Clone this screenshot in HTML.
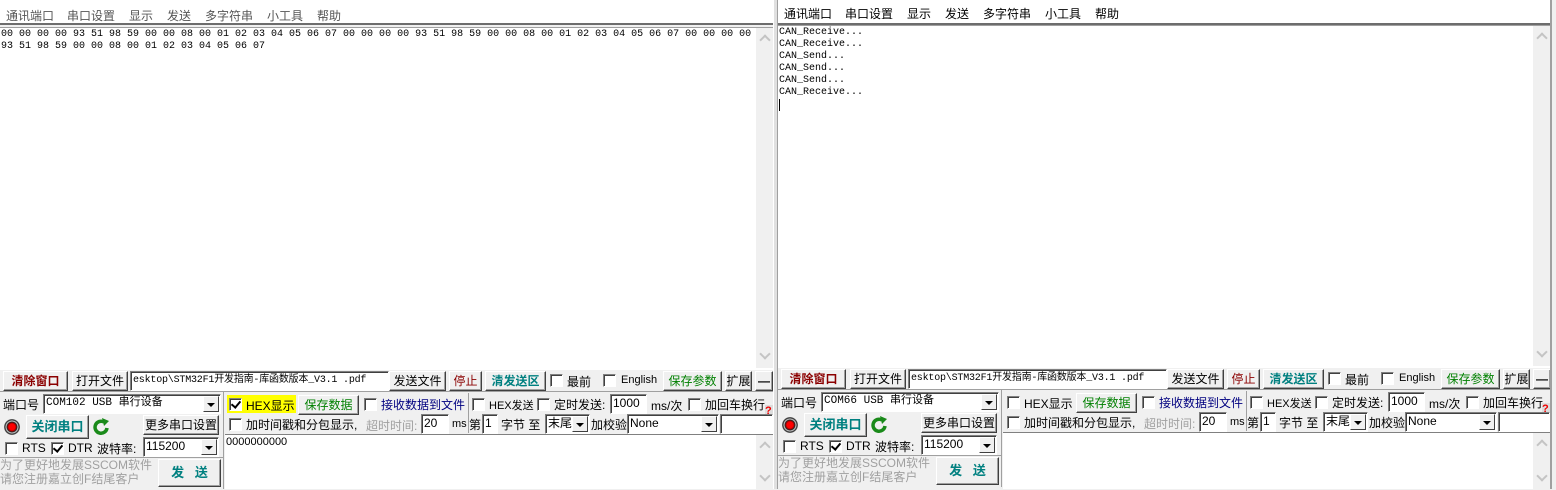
<!DOCTYPE html>
<html><head><meta charset="utf-8">
<style>
*{margin:0;padding:0;box-sizing:border-box}
body{width:1556px;height:489px;background:#f0f0f0;position:relative;overflow:hidden;font-family:"Liberation Sans","Noto Sans CJK SC",sans-serif;font-size:12px;color:#000}
.p{position:absolute;top:0;height:489px;width:773px;background:#f0f0f0}
.a{position:absolute;white-space:nowrap}
.menu{position:absolute;top:0;left:0;right:0;height:25px;background:#fff;border-bottom:2px solid #6d6d6d}
.menu span{position:absolute;top:6px;font-size:12px}
.recv{position:absolute;left:0;top:27px;right:0;height:341px;background:#fff;border-top:1px solid #a0a0a0}
.sb{position:absolute;right:0;top:0;width:17px;bottom:0;background:#f0f0f0}
.sb:before{content:"";position:absolute;left:5px;top:8px;width:6px;height:6px;border-left:2px solid #c4c4c4;border-top:2px solid #c4c4c4;transform:rotate(45deg)}
.sb:after{content:"";position:absolute;left:5px;bottom:10px;width:6px;height:6px;border-right:2px solid #c4c4c4;border-bottom:2px solid #c4c4c4;transform:rotate(45deg)}
.mono{font-family:"Liberation Mono","Noto Sans CJK SC",monospace;font-size:10px;line-height:12px}
.btn{position:absolute;height:20px;background:#f0f0f0;border:1px solid;border-color:#fff #404040 #404040 #fff;box-shadow:inset -1px -1px 0 #a0a0a0;text-align:center;line-height:18px;font-size:12px;white-space:nowrap}
.in{position:absolute;height:20px;background:#fff;border:1px solid;border-color:#808080 #fff #fff #808080;box-shadow:inset 1px 1px 0 #404040;line-height:17px;padding-left:2px;white-space:nowrap;overflow:hidden}
.dd{position:absolute;right:1px;top:1px;width:16px;height:16px;background:#f0f0f0;border:1px solid;border-color:#fff #404040 #404040 #fff}
.dd:after{content:"";position:absolute;left:3px;top:6px;border-left:4px solid transparent;border-right:4px solid transparent;border-top:4px solid #000}
.cb{position:absolute;width:13px;height:13px;background:#fff;border:1px solid;border-color:#808080 #fff #fff #808080;box-shadow:inset 1px 1px 0 #404040}
.cb.c{background:#fff url("") no-repeat}
.cb.c:after{content:"";position:absolute;left:3px;top:0px;width:4px;height:7px;border-right:2px solid #000;border-bottom:2px solid #000;transform:rotate(40deg)}
.sep{position:absolute;background:#a0a0a0}
.rec{position:absolute;width:16px;height:16px;border-radius:50%;background:radial-gradient(circle,#f00 0 3px,#a00 4px,#222 5px,#ddd 6px,#222 7px,#888 8px)}
.fn{font-size:10px;letter-spacing:-0.2px}
</style></head><body>

<!-- LEFT -->
<div class="p" style="left:0">
 <div class="menu" style="color:#555">
  <span style="left:6px;top:7px">通讯端口</span><span style="left:67px;top:7px">串口设置</span><span style="left:129px;top:7px">显示</span><span style="left:167px;top:7px">发送</span><span style="left:205px;top:7px">多字符串</span><span style="left:267px;top:7px">小工具</span><span style="left:317px;top:7px">帮助</span>
 </div>
 <div class="recv"><div class="a mono" style="left:1px;top:1px">00 00 00 00 93 51 98 59 00 00 08 00 01 02 03 04 05 06 07 00 00 00 00 93 51 98 59 00 00 08 00 01 02 03 04 05 06 07 00 00 00 00<br>93 51 98 59 00 00 08 00 01 02 03 04 05 06 07</div><div class="sb"></div></div>
 <div class="sep" style="left:0;top:368px;width:773px;height:2px;background:#fff"></div>
 <div class="btn" style="left:3px;top:371px;width:65px;color:#8b0000;font-weight:bold">清除窗口</div>
 <div class="btn" style="left:72px;top:371px;width:56px">打开文件</div>
 <div class="in mono fn" style="left:130px;top:371px;width:259px;line-height:17px">esktop\STM32F1开发指南-库函数版本_V3.1 .pdf</div>
 <div class="btn" style="left:389px;top:371px;width:57px">发送文件</div>
 <div class="btn" style="left:449px;top:371px;width:33px;color:#8b0000">停止</div>
 <div class="btn" style="left:485px;top:371px;width:61px;color:#008080;font-weight:bold">清发送区</div>
 <div class="cb" style="left:550px;top:374px"></div><div class="a" style="left:567px;top:373px">最前</div>
 <div class="cb" style="left:603px;top:374px"></div><div class="a" style="left:621px;top:374px;font-size:11px">English</div>
 <div class="btn" style="left:663px;top:371px;width:59px;color:#008000">保存参数</div>
 <div class="btn" style="left:725px;top:371px;width:27px">扩展</div>
 <div class="btn" style="left:755px;top:371px;width:18px;font-weight:bold">—</div>
 <div class="sep" style="left:0;top:391px;width:773px;height:1px"></div>
 <div class="a" style="left:3px;top:396px">端口号</div>
 <div class="in mono" style="left:43px;top:394px;width:178px;font-size:11px">COM102 USB 串行设备<div class="dd"></div></div>
 <div class="rec" style="left:4px;top:419px"></div>
 <div class="btn" style="left:26px;top:415px;width:63px;height:24px;line-height:22px;color:#008080;font-weight:bold;font-size:13px">关闭串口</div>
 <svg class="a" style="left:93px;top:417px" width="18" height="20" viewBox="0 0 18 20"><path d="M14 11a6 6 0 1 1-3-6" fill="none" stroke="#1a8a1a" stroke-width="3.5"/><path d="M9 1l7 3-5 5z" fill="#1a8a1a"/></svg>
 <div class="btn" style="left:143px;top:415px;width:76px">更多串口设置</div>
 <div class="cb" style="left:5px;top:442px"></div><div class="a" style="left:22px;top:441px">RTS</div>
 <div class="cb c" style="left:51px;top:442px"></div><div class="a" style="left:68px;top:441px">DTR</div>
 <div class="a" style="left:97px;top:440px">波特率:</div>
 <div class="in" style="left:143px;top:437px;width:76px">115200<div class="dd"></div></div>
 <div class="sep" style="left:0;top:457px;width:223px;height:1px"></div>
 <div class="a" style="left:0;top:458px;color:#a0a0a0;line-height:14px;font-size:12px">为了更好地发展SSCOM软件<br>请您注册嘉立创F结尾客户</div>
 <div class="btn" style="left:158px;top:459px;width:63px;height:28px;line-height:26px;color:#008080;font-weight:bold;font-size:13px">发&nbsp;&nbsp;&nbsp;送</div>
 <div class="sep" style="left:223px;top:392px;width:1px;height:97px"></div>
 <div class="a" style="left:227px;top:395px;width:69px;height:18px;background:#ff0"></div>
 <div class="cb c" style="left:229px;top:398px"></div><div class="a" style="left:246px;top:397px">HEX显示</div>
 <div class="btn" style="left:298px;top:395px;width:61px;color:#008000">保存数据</div>
 <div class="cb" style="left:364px;top:398px"></div><div class="a" style="left:381px;top:396px;color:#000080">接收数据到文件</div>
 <div class="sep" style="left:468px;top:393px;width:1px;height:40px"></div>
 <div class="cb" style="left:472px;top:398px"></div><div class="a" style="left:489px;top:397px;font-size:11px">HEX发送</div>
 <div class="cb" style="left:537px;top:398px"></div><div class="a" style="left:554px;top:396px">定时发送:</div>
 <div class="in" style="left:610px;top:394px;width:37px">1000</div>
 <div class="a" style="left:651px;top:397px">ms/次</div>
 <div class="cb" style="left:688px;top:398px"></div><div class="a" style="left:705px;top:396px">加回车换行</div>
 <div class="a" style="left:765px;top:405px;width:9px;height:12px;background:#ddd;color:#e00;font-weight:bold;font-size:11px;line-height:12px">?</div>
 <div class="cb" style="left:229px;top:418px"></div><div class="a" style="left:246px;top:416px">加时间戳和分包显示,</div>
 <div class="a" style="left:366px;top:417px;color:#a0a0a0">超时时间:</div>
 <div class="in" style="left:421px;top:414px;width:28px">20</div>
 <div class="a" style="left:452px;top:418px;font-size:11px">ms</div>
 <div class="a" style="left:469px;top:416px">第</div>
 <div class="in" style="left:482px;top:414px;width:16px">1</div>
 <div class="a" style="left:501px;top:416px">字节 至</div>
 <div class="in" style="left:545px;top:414px;width:45px">末尾<div class="dd"></div></div>
 <div class="a" style="left:591px;top:416px">加校验</div>
 <div class="in" style="left:627px;top:414px;width:92px">None<div class="dd"></div></div>
 <div class="in" style="left:720px;top:414px;width:53px"></div>
 <div class="a" style="left:225px;top:434px;width:548px;height:55px;background:#fff;border-top:1px solid #808080"><div class="a" style="left:1px;top:1px;font-size:11px">0000000000</div><div class="sb" style="top:0;height:55px"></div></div>
</div>
<div class="a" style="left:773px;top:0;width:5px;height:489px;background:#e0e0e0;border-left:1px solid #fff;border-right:1px solid #a0a0a0"></div>

<!-- RIGHT -->
<div class="p" style="left:778px;width:772px;top:-2px">
 <div class="menu" style="height:27px">
  <span style="left:6px;top:7px">通讯端口</span><span style="left:67px;top:7px">串口设置</span><span style="left:129px;top:7px">显示</span><span style="left:167px;top:7px">发送</span><span style="left:205px;top:7px">多字符串</span><span style="left:267px;top:7px">小工具</span><span style="left:317px;top:7px">帮助</span>
 </div>
 <div class="recv" style="top:27px"><div class="a mono" style="left:1px;top:1px">CAN_Receive...<br>CAN_Receive...<br>CAN_Send...<br>CAN_Send...<br>CAN_Send...<br>CAN_Receive...</div><div class="a" style="left:1px;top:73px;width:1px;height:12px;background:#000"></div><div class="sb"></div></div>
 <div class="sep" style="left:0;top:368px;width:772px;height:2px;background:#fff"></div>
 <div class="btn" style="left:3px;top:371px;width:65px;color:#8b0000;font-weight:bold">清除窗口</div>
 <div class="btn" style="left:72px;top:371px;width:56px">打开文件</div>
 <div class="in mono fn" style="left:130px;top:371px;width:259px;line-height:17px">esktop\STM32F1开发指南-库函数版本_V3.1 .pdf</div>
 <div class="btn" style="left:389px;top:371px;width:57px">发送文件</div>
 <div class="btn" style="left:449px;top:371px;width:33px;color:#8b0000">停止</div>
 <div class="btn" style="left:485px;top:371px;width:61px;color:#008080;font-weight:bold">清发送区</div>
 <div class="cb" style="left:550px;top:374px"></div><div class="a" style="left:567px;top:373px">最前</div>
 <div class="cb" style="left:603px;top:374px"></div><div class="a" style="left:621px;top:374px;font-size:11px">English</div>
 <div class="btn" style="left:663px;top:371px;width:59px;color:#008000">保存参数</div>
 <div class="btn" style="left:725px;top:371px;width:27px">扩展</div>
 <div class="btn" style="left:755px;top:371px;width:18px;font-weight:bold">—</div>
 <div class="sep" style="left:0;top:391px;width:772px;height:1px"></div>
 <div class="a" style="left:3px;top:396px">端口号</div>
 <div class="in mono" style="left:43px;top:394px;width:178px;font-size:11px">COM66 USB 串行设备<div class="dd"></div></div>
 <div class="rec" style="left:4px;top:419px"></div>
 <div class="btn" style="left:26px;top:415px;width:63px;height:24px;line-height:22px;color:#008080;font-weight:bold;font-size:13px">关闭串口</div>
 <svg class="a" style="left:93px;top:417px" width="18" height="20" viewBox="0 0 18 20"><path d="M14 11a6 6 0 1 1-3-6" fill="none" stroke="#1a8a1a" stroke-width="3.5"/><path d="M9 1l7 3-5 5z" fill="#1a8a1a"/></svg>
 <div class="btn" style="left:143px;top:415px;width:76px">更多串口设置</div>
 <div class="cb" style="left:5px;top:442px"></div><div class="a" style="left:22px;top:441px">RTS</div>
 <div class="cb c" style="left:51px;top:442px"></div><div class="a" style="left:68px;top:441px">DTR</div>
 <div class="a" style="left:97px;top:440px">波特率:</div>
 <div class="in" style="left:143px;top:437px;width:76px">115200<div class="dd"></div></div>
 <div class="sep" style="left:0;top:457px;width:223px;height:1px"></div>
 <div class="a" style="left:0;top:458px;color:#a0a0a0;line-height:14px;font-size:12px">为了更好地发展SSCOM软件<br>请您注册嘉立创F结尾客户</div>
 <div class="btn" style="left:158px;top:459px;width:63px;height:28px;line-height:26px;color:#008080;font-weight:bold;font-size:13px">发&nbsp;&nbsp;&nbsp;送</div>
 <div class="sep" style="left:223px;top:392px;width:1px;height:97px"></div>
 <div class="cb" style="left:229px;top:398px"></div><div class="a" style="left:246px;top:397px">HEX显示</div>
 <div class="btn" style="left:298px;top:395px;width:61px;color:#008000">保存数据</div>
 <div class="cb" style="left:364px;top:398px"></div><div class="a" style="left:381px;top:396px;color:#000080">接收数据到文件</div>
 <div class="sep" style="left:468px;top:393px;width:1px;height:40px"></div>
 <div class="cb" style="left:472px;top:398px"></div><div class="a" style="left:489px;top:397px;font-size:11px">HEX发送</div>
 <div class="cb" style="left:537px;top:398px"></div><div class="a" style="left:554px;top:396px">定时发送:</div>
 <div class="in" style="left:610px;top:394px;width:37px">1000</div>
 <div class="a" style="left:651px;top:397px">ms/次</div>
 <div class="cb" style="left:688px;top:398px"></div><div class="a" style="left:705px;top:396px">加回车换行</div>
 <div class="a" style="left:764px;top:405px;width:9px;height:12px;background:#ddd;color:#e00;font-weight:bold;font-size:11px;line-height:12px">?</div>
 <div class="cb" style="left:229px;top:418px"></div><div class="a" style="left:246px;top:416px">加时间戳和分包显示,</div>
 <div class="a" style="left:366px;top:417px;color:#a0a0a0">超时时间:</div>
 <div class="in" style="left:421px;top:414px;width:28px">20</div>
 <div class="a" style="left:452px;top:418px;font-size:11px">ms</div>
 <div class="a" style="left:469px;top:416px">第</div>
 <div class="in" style="left:482px;top:414px;width:16px">1</div>
 <div class="a" style="left:501px;top:416px">字节 至</div>
 <div class="in" style="left:545px;top:414px;width:45px">末尾<div class="dd"></div></div>
 <div class="a" style="left:591px;top:416px">加校验</div>
 <div class="in" style="left:627px;top:414px;width:92px">None<div class="dd"></div></div>
 <div class="in" style="left:720px;top:414px;width:52px"></div>
 <div class="a" style="left:225px;top:434px;width:547px;height:57px;background:#fff;border-top:1px solid #808080"><div class="sb" style="top:0;height:57px"></div></div>
</div>
<div class="a" style="left:1550px;top:0;width:6px;height:489px;background:#f0f0f0;border-left:2px solid #a0a0a0"></div>
</body></html>
